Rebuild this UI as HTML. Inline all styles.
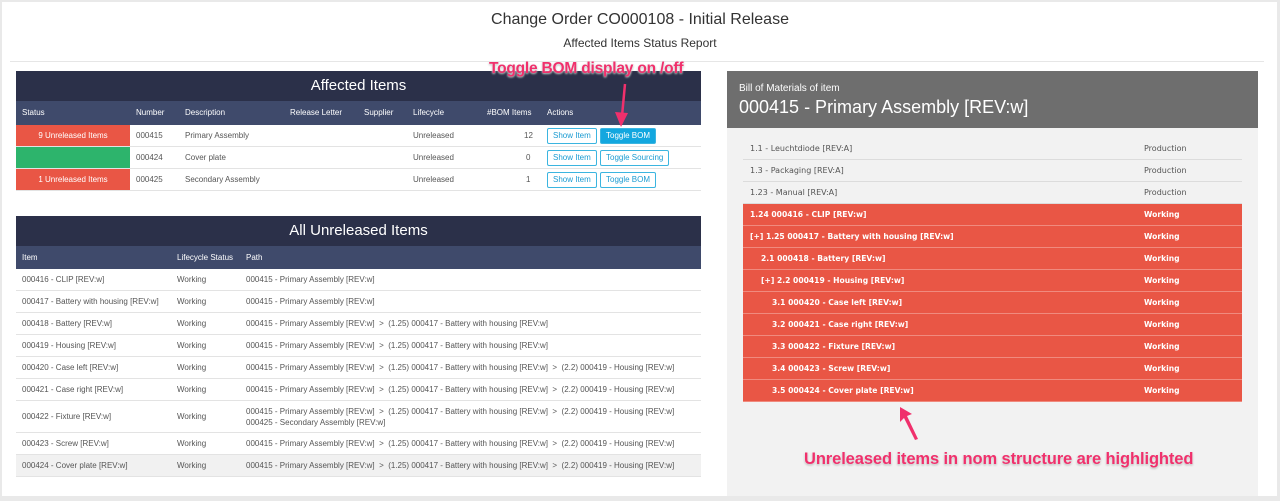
<!DOCTYPE html>
<html><head><style>
*{margin:0;padding:0;box-sizing:border-box}
body{width:1280px;height:501px;background:#e9e9e9;font-family:"Liberation Sans",sans-serif;position:relative;overflow:hidden}
.page{position:absolute;left:2px;top:2px;width:1275px;height:494px;background:#fff}
.abs{position:absolute}
.t1{left:0;width:1280px;top:11px;text-align:center;font-size:16px;color:#333}
.t2{left:0;width:1280px;top:36px;text-align:center;font-size:12px;color:#333}
.hr{left:10px;top:61px;width:1254px;height:1px;background:#e6e6e6}
.hd{background:#2b3049;color:#fff;text-align:center;font-size:15px}
.sh{background:#3f4a6b;color:#fff;font-size:8px}
.sh span,.r span{position:absolute;top:0}
.r{position:absolute;left:16px;width:685px;height:22px;border-bottom:1px solid #e3e3e3;font-size:8px;color:#555;line-height:22px}
.btn{position:absolute;top:3px;height:16px;line-height:14px;border:1px solid #3bb5e0;color:#1a9bd2;border-radius:2px;padding:0 5px;font-size:8px;background:#fff}
.btn.on{background:#13a7df;color:#fff}
.br{position:absolute;left:743px;width:499px;height:22px;line-height:21px;font-size:8px;color:#555;border-bottom:1px solid #dcdcdc;font-family:"DejaVu Sans",sans-serif}
.br.w{background:#e95645;color:#fff;font-weight:bold;font-size:7.6px;border-bottom:1px solid #f08a7e}
.br .s{position:absolute;left:401px}
.ann{color:#f0306c;font-weight:bold;text-shadow:0 0 2px #fff,0 1px 2px #999;white-space:nowrap}
</style></head><body>
<div class="page"></div>
<div class="abs t1">Change Order CO000108 - Initial Release</div>
<div class="abs t2">Affected Items Status Report</div>
<div class="abs hr"></div>

<div class="abs hd" style="left:16px;top:71px;width:685px;height:30px;line-height:30px">Affected Items</div>
<div class="abs sh" style="left:16px;top:101px;width:685px;height:24px;line-height:24px">
<span style="left:6px">Status</span><span style="left:120px">Number</span><span style="left:169px">Description</span><span style="left:274px">Release Letter</span><span style="left:348px">Supplier</span><span style="left:397px">Lifecycle</span><span style="left:471px">#BOM Items</span><span style="left:531px">Actions</span></div>
<div class="r" style="top:125px"><span style="left:0;width:114px;height:21px;background:#e95645;color:#fff;text-align:center">9 Unreleased Items</span><span style="left:120px">000415</span><span style="left:169px">Primary Assembly</span><span style="left:397px">Unreleased</span><span style="left:508px">12</span><div class="btn" style="left:531px">Show Item</div><div class="btn on" style="left:584px">Toggle BOM</div></div>
<div class="r" style="top:147px"><span style="left:0;width:114px;height:21px;background:#2db46c"></span><span style="left:120px">000424</span><span style="left:169px">Cover plate</span><span style="left:397px">Unreleased</span><span style="left:510px">0</span><div class="btn" style="left:531px">Show Item</div><div class="btn" style="left:584px">Toggle Sourcing</div></div>
<div class="r" style="top:169px"><span style="left:0;width:114px;height:21px;background:#e95645;color:#fff;text-align:center">1 Unreleased Items</span><span style="left:120px">000425</span><span style="left:169px">Secondary Assembly</span><span style="left:397px">Unreleased</span><span style="left:510px">1</span><div class="btn" style="left:531px">Show Item</div><div class="btn" style="left:584px">Toggle BOM</div></div>

<div class="abs ann" style="left:489px;top:60px;font-size:15.5px;letter-spacing:-0.2px">Toggle BOM display on /off</div>
<svg class="abs" style="left:612px;top:80px" width="20" height="50"><line x1="13" y1="4" x2="10" y2="36" stroke="#f0306c" stroke-width="2.5"/><polygon points="3,32 16,33 9,47" fill="#f0306c"/></svg>

<div class="abs hd" style="left:16px;top:216px;width:685px;height:30px;line-height:30px">All Unreleased Items</div>
<div class="abs sh" style="left:16px;top:246px;width:685px;height:23px;line-height:23px"><span style="left:6px">Item</span><span style="left:161px">Lifecycle Status</span><span style="left:230px">Path</span></div>
<div class="r" style="top:269px"><span style="left:6px">000416 - CLIP [REV:w]</span><span style="left:161px">Working</span><span style="left:230px">000415 - Primary Assembly [REV:w]</span></div>
<div class="r" style="top:291px"><span style="left:6px">000417 - Battery with housing [REV:w]</span><span style="left:161px">Working</span><span style="left:230px">000415 - Primary Assembly [REV:w]</span></div>
<div class="r" style="top:313px"><span style="left:6px">000418 - Battery [REV:w]</span><span style="left:161px">Working</span><span style="left:230px">000415 - Primary Assembly [REV:w] &nbsp;&gt;&nbsp; (1.25) 000417 - Battery with housing [REV:w]</span></div>
<div class="r" style="top:335px"><span style="left:6px">000419 - Housing [REV:w]</span><span style="left:161px">Working</span><span style="left:230px">000415 - Primary Assembly [REV:w] &nbsp;&gt;&nbsp; (1.25) 000417 - Battery with housing [REV:w]</span></div>
<div class="r" style="top:357px"><span style="left:6px">000420 - Case left [REV:w]</span><span style="left:161px">Working</span><span style="left:230px">000415 - Primary Assembly [REV:w] &nbsp;&gt;&nbsp; (1.25) 000417 - Battery with housing [REV:w] &nbsp;&gt;&nbsp; (2.2) 000419 - Housing [REV:w]</span></div>
<div class="r" style="top:379px"><span style="left:6px">000421 - Case right [REV:w]</span><span style="left:161px">Working</span><span style="left:230px">000415 - Primary Assembly [REV:w] &nbsp;&gt;&nbsp; (1.25) 000417 - Battery with housing [REV:w] &nbsp;&gt;&nbsp; (2.2) 000419 - Housing [REV:w]</span></div>
<div class="r" style="top:401px;height:32px;line-height:32px"><span style="left:6px">000422 - Fixture [REV:w]</span><span style="left:161px">Working</span><span style="left:230px;line-height:11px;top:5px">000415 - Primary Assembly [REV:w] &nbsp;&gt;&nbsp; (1.25) 000417 - Battery with housing [REV:w] &nbsp;&gt;&nbsp; (2.2) 000419 - Housing [REV:w]<br>000425 - Secondary Assembly [REV:w]</span></div>
<div class="r" style="top:433px"><span style="left:6px">000423 - Screw [REV:w]</span><span style="left:161px">Working</span><span style="left:230px">000415 - Primary Assembly [REV:w] &nbsp;&gt;&nbsp; (1.25) 000417 - Battery with housing [REV:w] &nbsp;&gt;&nbsp; (2.2) 000419 - Housing [REV:w]</span></div>
<div class="r" style="top:455px;background:#f1f1f1"><span style="left:6px">000424 - Cover plate [REV:w]</span><span style="left:161px">Working</span><span style="left:230px">000415 - Primary Assembly [REV:w] &nbsp;&gt;&nbsp; (1.25) 000417 - Battery with housing [REV:w] &nbsp;&gt;&nbsp; (2.2) 000419 - Housing [REV:w]</span></div>

<div class="abs" style="left:727px;top:71px;width:531px;height:425px;background:#f2f2f2"></div>
<div class="abs" style="left:727px;top:71px;width:531px;height:57px;background:#6e6e6e;color:#fff">
<div style="position:absolute;left:12px;top:12px;font-size:10px">Bill of Materials of item</div>
<div style="position:absolute;left:12px;top:26px;font-size:18px">000415 - Primary Assembly [REV:w]</div></div>
<div class="br" style="top:138px"><span style="margin-left:7px">1.1 - Leuchtdiode [REV:A]</span><span class="s">Production</span></div>
<div class="br" style="top:160px"><span style="margin-left:7px">1.3 - Packaging [REV:A]</span><span class="s">Production</span></div>
<div class="br" style="top:182px"><span style="margin-left:7px">1.23 - Manual [REV:A]</span><span class="s">Production</span></div>
<div class="br w" style="top:204px"><span style="margin-left:7px">1.24 000416 - CLIP [REV:w]</span><span class="s">Working</span></div>
<div class="br w" style="top:226px"><span style="margin-left:7px">[+] 1.25 000417 - Battery with housing [REV:w]</span><span class="s">Working</span></div>
<div class="br w" style="top:248px"><span style="margin-left:18px">2.1 000418 - Battery [REV:w]</span><span class="s">Working</span></div>
<div class="br w" style="top:270px"><span style="margin-left:18px">[+] 2.2 000419 - Housing [REV:w]</span><span class="s">Working</span></div>
<div class="br w" style="top:292px"><span style="margin-left:29px">3.1 000420 - Case left [REV:w]</span><span class="s">Working</span></div>
<div class="br w" style="top:314px"><span style="margin-left:29px">3.2 000421 - Case right [REV:w]</span><span class="s">Working</span></div>
<div class="br w" style="top:336px"><span style="margin-left:29px">3.3 000422 - Fixture [REV:w]</span><span class="s">Working</span></div>
<div class="br w" style="top:358px"><span style="margin-left:29px">3.4 000423 - Screw [REV:w]</span><span class="s">Working</span></div>
<div class="br w" style="top:380px"><span style="margin-left:29px">3.5 000424 - Cover plate [REV:w]</span><span class="s">Working</span></div>
<svg class="abs" style="left:895px;top:405px" width="30" height="40"><polygon points="5,2 17,9 12,11 23,34 20,35 9,13 5,17" fill="#f0306c"/></svg>
<div class="abs ann" style="left:804px;top:450px;font-size:16.5px;letter-spacing:-0.1px">Unreleased items in nom structure are highlighted</div>
</body></html>
